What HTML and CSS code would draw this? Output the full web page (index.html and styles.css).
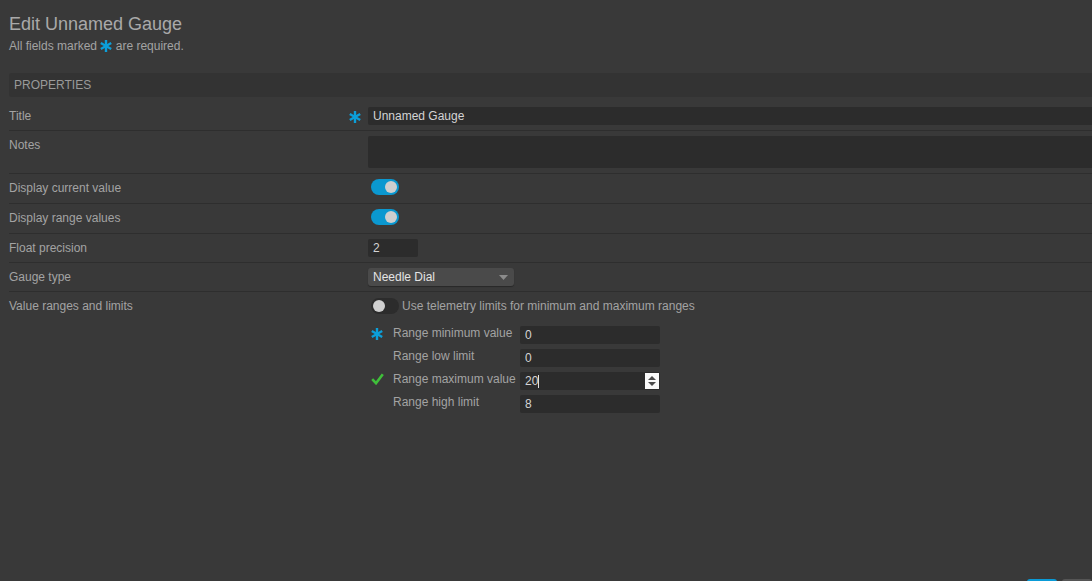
FILE: index.html
```html
<!DOCTYPE html>
<html lang="en">
<head>
    <meta charset="UTF-8">
    <meta name="viewport" content="width=device-width, initial-scale=1.0">
    <title>Edit Unnamed Gauge</title>
    <link rel="stylesheet" href="styles.css">
</head>
<body>
    <div class="main">
        <h1>Edit Unnamed Gauge</h1>
        <p class="hint">All fields marked
            <svg class="req" viewBox="0 0 12 12"><g stroke="#0c9fd9" stroke-width="2.4"><line x1="6" y1="0" x2="6" y2="12"/><line x1="0.8" y1="3" x2="11.2" y2="9"/><line x1="0.8" y1="9" x2="11.2" y2="3"/></g></svg>
            are required.</p>

        <div class="section-title">PROPERTIES</div>

        <div class="rows">
            <div class="row">
                <label class="label">Title</label>
                <span class="mark">
                    <svg class="req" viewBox="0 0 12 12"><g stroke="#0c9fd9" stroke-width="2.4"><line x1="6" y1="0" x2="6" y2="12"/><line x1="0.8" y1="3" x2="11.2" y2="9"/><line x1="0.8" y1="9" x2="11.2" y2="3"/></g></svg>
                </span>
                <div class="value"><input class="field wide" type="text" value="Unnamed Gauge"></div>
            </div>

            <div class="row">
                <label class="label">Notes</label>
                <span class="mark"></span>
                <div class="value"><textarea class="field wide notes"></textarea></div>
            </div>

            <div class="row switch-row">
                <label class="label">Display current value</label>
                <span class="mark"></span>
                <div class="value"><span class="toggle on"><span class="knob"></span></span></div>
            </div>

            <div class="row switch-row">
                <label class="label">Display range values</label>
                <span class="mark"></span>
                <div class="value"><span class="toggle on"><span class="knob"></span></span></div>
            </div>

            <div class="row">
                <label class="label">Float precision</label>
                <span class="mark"></span>
                <div class="value"><input class="field small" type="text" value="2"></div>
            </div>

            <div class="row">
                <label class="label">Gauge type</label>
                <span class="mark"></span>
                <div class="value">
                    <div class="select">
                        <span>Needle Dial</span>
                        <svg width="9" height="5" viewBox="0 0 9 5"><path d="M0 0h9L4.5 5z" fill="#8c8c8c"/></svg>
                    </div>
                </div>
            </div>

            <div class="row">
                <label class="label">Value ranges and limits</label>
                <span class="mark"></span>
                <div class="value">
                    <div class="telemetry">
                        <span class="toggle"><span class="knob"></span></span>
                        <span>Use telemetry limits for minimum and maximum ranges</span>
                    </div>

                    <div class="ranges">
                        <span class="sub-mark">
                            <svg class="req" viewBox="0 0 12 12"><g stroke="#0c9fd9" stroke-width="2.4"><line x1="6" y1="0" x2="6" y2="12"/><line x1="0.8" y1="3" x2="11.2" y2="9"/><line x1="0.8" y1="9" x2="11.2" y2="3"/></g></svg>
                        </span>
                        <span class="sub-label">Range minimum value</span>
                        <input class="field" type="text" value="0">

                        <span class="sub-mark"></span>
                        <span class="sub-label">Range low limit</span>
                        <input class="field" type="text" value="0">

                        <span class="sub-mark">
                            <svg class="check" viewBox="0 0 13 12"><path d="M1.2 6.2l3.8 4 6.8-9" fill="none" stroke="#3fbf3a" stroke-width="2.6"/></svg>
                        </span>
                        <span class="sub-label">Range maximum value</span>
                        <div class="field focused">
                            <span>20</span><span class="caret"></span>
                            <span class="spinner">
                                <svg width="14" height="14" viewBox="0 0 14 14"><path d="M3 6h8L7 2z M3 8h8l-4 4z" fill="#4a4a4a"/></svg>
                            </span>
                        </div>

                        <span class="sub-mark"></span>
                        <span class="sub-label">Range high limit</span>
                        <input class="field" type="text" value="8">
                    </div>
                </div>
            </div>
        </div>
    </div>

    <div class="footer">
        <button class="btn primary" aria-label="Save"></button>
        <button class="btn" aria-label="Cancel"></button>
    </div>
</body>
</html>
```

FILE: styles.css
```css
* {
    margin: 0;
    padding: 0;
    box-sizing: border-box;
}
body {
    background: #393939;
    color: #a3a3a3;
    font-family: "Liberation Sans", Arial, sans-serif;
    font-size: 12px;
    overflow: hidden;
}
.main {
    min-height: calc(100vh - 2px);
    padding: 13px 0 0 9px;
    margin-right: -12px;
}
h1 {
    font-size: 18px;
    line-height: 22px;
    font-weight: normal;
    color: #a9a9a9;
}
.hint {
    margin-top: 4px;
    line-height: 14px;
}
.req {
    display: inline-block;
    width: 12px;
    height: 12px;
    vertical-align: -2px;
}
.section-title {
    margin-top: 20px;
    height: 24px;
    line-height: 24px;
    padding-left: 5px;
    background: #333333;
    border-radius: 3px 0 0 3px;
    color: #9a9a9a;
}
.rows {
    margin-top: 5px;
}
.row {
    display: grid;
    grid-template-columns: 336px 23px 1fr;
    padding: 5px 0;
    border-bottom: 1px solid #2e2e2e;
}
.row:last-child {
    border-bottom: none;
}
.switch-row {
    padding-bottom: 6px;
}
.label {
    line-height: 18px;
}
.mark {
    padding: 3px 0 0 4px;
}
.field {
    height: 18px;
    background: #2c2c2c;
    border: none;
    border-radius: 2px;
    color: #d4d4d4;
    font: inherit;
    padding: 0 5px;
    outline: none;
}
.wide {
    width: 100%;
    display: block;
}
.notes {
    height: 32px;
    resize: none;
}
.small {
    width: 50px;
}
.toggle {
    display: flex;
    align-items: center;
    width: 28px;
    height: 16px;
    margin-left: 3px;
    padding: 0 2px;
    border-radius: 8px;
    background: #2c2c2c;
}
.toggle.on {
    background: #0b98d0;
    justify-content: flex-end;
}
.knob {
    width: 12px;
    height: 12px;
    border-radius: 50%;
    background: #cfcfcf;
}
.select {
    display: flex;
    justify-content: space-between;
    align-items: center;
    width: 146px;
    height: 18px;
    padding: 0 6px 0 5px;
    background: #4a4a4a;
    border-radius: 3px;
    box-shadow: 0 1px 1px rgba(0, 0, 0, 0.3);
    color: #e4e4e4;
}
.telemetry {
    display: flex;
    align-items: center;
    gap: 3px;
    height: 16px;
    margin-top: 1px;
}
.ranges {
    display: grid;
    grid-template-columns: 22px 127px 140px;
    row-gap: 5px;
    margin: 12px 0 0 3px;
}
.sub-mark {
    padding-top: 1px;
}
.check {
    width: 13px;
    height: 12px;
}
.sub-label {
    line-height: 14px;
}
.ranges .field {
    width: 140px;
}
.focused {
    display: flex;
    align-items: center;
    padding-right: 1px;
}
.caret {
    width: 1px;
    height: 13px;
    background: #e0e0e0;
}
.spinner {
    display: flex;
    align-items: center;
    justify-content: center;
    width: 14px;
    height: 16px;
    margin-left: auto;
    background: #fafafa;
}
.footer {
    display: flex;
    justify-content: flex-end;
    gap: 5px;
}
.btn {
    width: 30px;
    height: 24px;
    border: none;
    border-radius: 3px;
    background: #555555;
}
.btn.primary {
    background: #0a9bd7;
}
```
